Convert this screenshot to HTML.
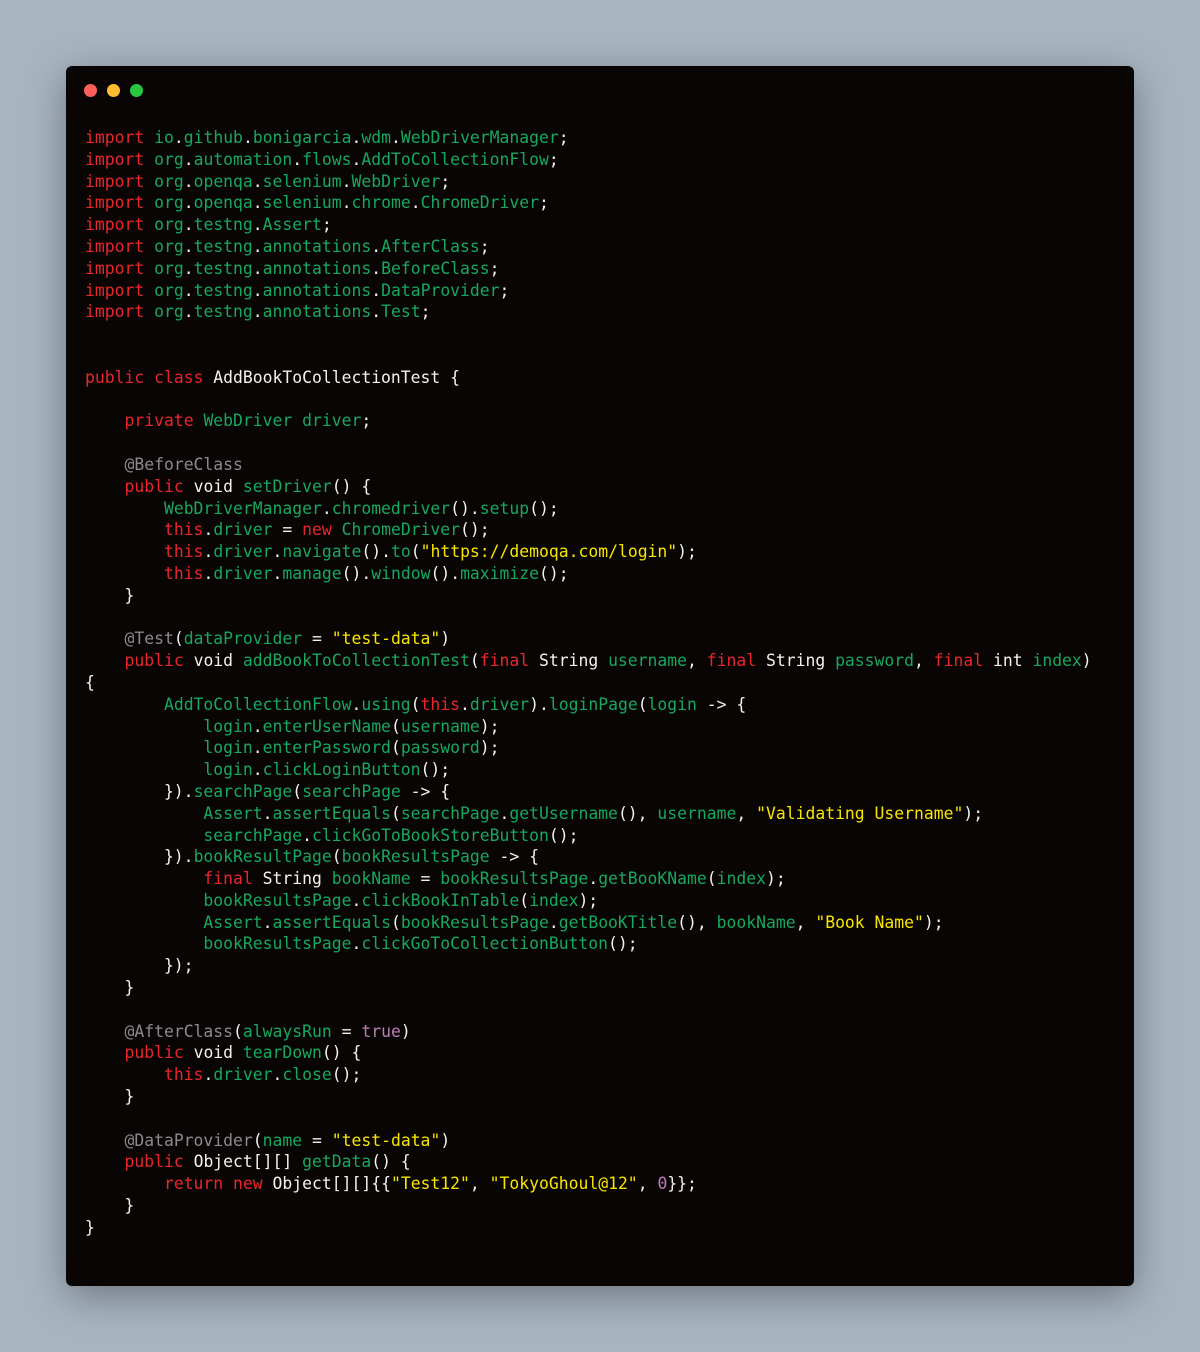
<!DOCTYPE html>
<html><head><meta charset="utf-8"><style>
html,body{margin:0;padding:0}
body{width:1200px;height:1352px;background:#a8b5c1;position:relative;overflow:hidden}
.win{position:absolute;left:66px;top:66px;width:1068px;height:1220px;background:#0a0505;border-radius:6px;box-shadow:0 10px 40px rgba(0,0,0,.35)}
.dot{position:absolute;top:18px;width:13px;height:13px;border-radius:50%}
pre{position:absolute;left:19px;top:61px;margin:0;font-family:"DejaVu Sans Mono","Liberation Mono",monospace;font-size:16.4px;line-height:21.8px;color:#f2f2ee}
.k{color:#e8262b}.g{color:#17a85f}.y{color:#f7e600}.a{color:#8a8a8a}.p{color:#b77fb3}
</style></head><body>
<div class="win">
<div class="dot" style="left:18px;background:#fe5f57"></div>
<div class="dot" style="left:41px;background:#febc2e"></div>
<div class="dot" style="left:64px;background:#28c840"></div>
<pre><span class="k">import</span> <span class="g">io</span>.<span class="g">github</span>.<span class="g">bonigarcia</span>.<span class="g">wdm</span>.<span class="g">WebDriverManager</span>;
<span class="k">import</span> <span class="g">org</span>.<span class="g">automation</span>.<span class="g">flows</span>.<span class="g">AddToCollectionFlow</span>;
<span class="k">import</span> <span class="g">org</span>.<span class="g">openqa</span>.<span class="g">selenium</span>.<span class="g">WebDriver</span>;
<span class="k">import</span> <span class="g">org</span>.<span class="g">openqa</span>.<span class="g">selenium</span>.<span class="g">chrome</span>.<span class="g">ChromeDriver</span>;
<span class="k">import</span> <span class="g">org</span>.<span class="g">testng</span>.<span class="g">Assert</span>;
<span class="k">import</span> <span class="g">org</span>.<span class="g">testng</span>.<span class="g">annotations</span>.<span class="g">AfterClass</span>;
<span class="k">import</span> <span class="g">org</span>.<span class="g">testng</span>.<span class="g">annotations</span>.<span class="g">BeforeClass</span>;
<span class="k">import</span> <span class="g">org</span>.<span class="g">testng</span>.<span class="g">annotations</span>.<span class="g">DataProvider</span>;
<span class="k">import</span> <span class="g">org</span>.<span class="g">testng</span>.<span class="g">annotations</span>.<span class="g">Test</span>;


<span class="k">public</span> <span class="k">class</span> AddBookToCollectionTest {

    <span class="k">private</span> <span class="g">WebDriver</span> <span class="g">driver</span>;

    <span class="a">@BeforeClass</span>
    <span class="k">public</span> void <span class="g">setDriver</span>() {
        <span class="g">WebDriverManager</span>.<span class="g">chromedriver</span>().<span class="g">setup</span>();
        <span class="k">this</span>.<span class="g">driver</span> = <span class="k">new</span> <span class="g">ChromeDriver</span>();
        <span class="k">this</span>.<span class="g">driver</span>.<span class="g">navigate</span>().<span class="g">to</span>(<span class="y">"https://demoqa.com/login"</span>);
        <span class="k">this</span>.<span class="g">driver</span>.<span class="g">manage</span>().<span class="g">window</span>().<span class="g">maximize</span>();
    }

    <span class="a">@Test</span>(<span class="g">dataProvider</span> = <span class="y">"test-data"</span>)
    <span class="k">public</span> void <span class="g">addBookToCollectionTest</span>(<span class="k">final</span> String <span class="g">username</span>, <span class="k">final</span> String <span class="g">password</span>, <span class="k">final</span> int <span class="g">index</span>)
{
        <span class="g">AddToCollectionFlow</span>.<span class="g">using</span>(<span class="k">this</span>.<span class="g">driver</span>).<span class="g">loginPage</span>(<span class="g">login</span> -&gt; {
            <span class="g">login</span>.<span class="g">enterUserName</span>(<span class="g">username</span>);
            <span class="g">login</span>.<span class="g">enterPassword</span>(<span class="g">password</span>);
            <span class="g">login</span>.<span class="g">clickLoginButton</span>();
        }).<span class="g">searchPage</span>(<span class="g">searchPage</span> -&gt; {
            <span class="g">Assert</span>.<span class="g">assertEquals</span>(<span class="g">searchPage</span>.<span class="g">getUsername</span>(), <span class="g">username</span>, <span class="y">"Validating Username"</span>);
            <span class="g">searchPage</span>.<span class="g">clickGoToBookStoreButton</span>();
        }).<span class="g">bookResultPage</span>(<span class="g">bookResultsPage</span> -&gt; {
            <span class="k">final</span> String <span class="g">bookName</span> = <span class="g">bookResultsPage</span>.<span class="g">getBooKName</span>(<span class="g">index</span>);
            <span class="g">bookResultsPage</span>.<span class="g">clickBookInTable</span>(<span class="g">index</span>);
            <span class="g">Assert</span>.<span class="g">assertEquals</span>(<span class="g">bookResultsPage</span>.<span class="g">getBooKTitle</span>(), <span class="g">bookName</span>, <span class="y">"Book Name"</span>);
            <span class="g">bookResultsPage</span>.<span class="g">clickGoToCollectionButton</span>();
        });
    }

    <span class="a">@AfterClass</span>(<span class="g">alwaysRun</span> = <span class="p">true</span>)
    <span class="k">public</span> void <span class="g">tearDown</span>() {
        <span class="k">this</span>.<span class="g">driver</span>.<span class="g">close</span>();
    }

    <span class="a">@DataProvider</span>(<span class="g">name</span> = <span class="y">"test-data"</span>)
    <span class="k">public</span> Object[][] <span class="g">getData</span>() {
        <span class="k">return</span> <span class="k">new</span> Object[][]{{<span class="y">"Test12"</span>, <span class="y">"TokyoGhoul@12"</span>, <span class="p">0</span>}};
    }
}</pre>
</div>
</body></html>
